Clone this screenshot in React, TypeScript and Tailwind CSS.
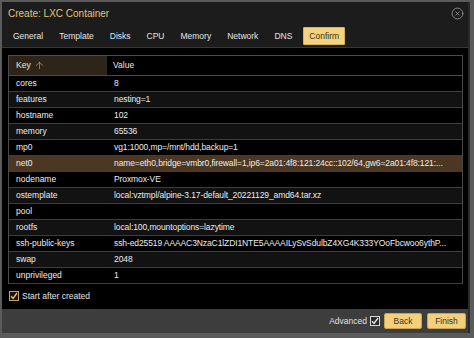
import React from 'react';
import { CircleX, ArrowUp } from 'lucide-react';

const rows: { key: string; value: string }[] = [
  { key: 'cores', value: '8' },
  { key: 'features', value: 'nesting=1' },
  { key: 'hostname', value: '102' },
  { key: 'memory', value: '65536' },
  { key: 'mp0', value: 'vg1:1000,mp=/mnt/hdd,backup=1' },
  { key: 'net0', value: 'name=eth0,bridge=vmbr0,firewall=1,ip6=2a01:4f8:121:24cc::102/64,gw6=2a01:4f8:121:...' },
  { key: 'nodename', value: 'Proxmox-VE' },
  { key: 'ostemplate', value: 'local:vztmpl/alpine-3.17-default_20221129_amd64.tar.xz' },
  { key: 'pool', value: '' },
  { key: 'rootfs', value: 'local:100,mountoptions=lazytime' },
  { key: 'ssh-public-keys', value: 'ssh-ed25519 AAAAC3NzaC1lZDI1NTE5AAAAILySvSdulbZ4XG4K333YOoFbcwoo6ythP...' },
  { key: 'swap', value: '2048' },
  { key: 'unprivileged', value: '1' },
];

const tabs = ['General', 'Template', 'Disks', 'CPU', 'Memory', 'Network', 'DNS', 'Confirm'];

const Check = ({ color }: { color: string }) => (
  <svg width="8" height="8" viewBox="0 0 8 8" fill="none">
    <polyline points="1,4.2 3.1,6.5 7,1" stroke={color} strokeWidth="1.3" />
  </svg>
);

export default function App() {
  return (
    <div className="w-[474px] h-[338px] bg-[#5b5b5b] pt-[2px] pl-[2px] pr-[4px] pb-[5px] font-['Liberation_Sans',Arial,sans-serif]">
      <div className="h-full flex flex-col border-r-2 border-[#2a2a2a] bg-[#1c1c1c]">
        {/* Title */}
        <div className="h-[23px] flex items-center justify-between pl-[6px] pr-[4px]">
          <span className="text-[10px] text-[#e6c46f]">Create: LXC Container</span>
          <CircleX size={13} strokeWidth={1.4} className="text-[#a3a3a3]" />
        </div>

        {/* Tabs */}
        <div className="h-[23px] flex items-center gap-[6px] pl-[6px] border-b border-[#383838]">
          {tabs.map((t) =>
            t === 'Confirm' ? (
              <span
                key={t}
                className="h-[18px] flex items-center px-[5px] text-[8.5px] text-[#3a3320] bg-[#f5d27e] border border-[#d8b15b] rounded-[1px]"
              >
                {t}
              </span>
            ) : (
              <span key={t} className="h-[18px] flex items-center px-[5px] text-[8.5px] text-[#e4e4e4]">
                {t}
              </span>
            )
          )}
        </div>

        {/* Content */}
        <div className="flex-1 bg-black pl-[6px] pt-[7px]">
          <div className="w-[455px] border border-[#4a4a4a] border-b-0">
            <div className="h-[20px] flex border-b border-[#4a4a4a] text-[8.5px] text-[#e6e6e6]">
              <div className="w-[98px] bg-[#2e2419] flex items-center gap-[3px] pl-[7px] border-r border-[#2a2a2a]">
                Key
                <ArrowUp size={11} strokeWidth={1.2} className="text-[#c4c4c4]" />
              </div>
              <div className="flex-1 flex items-center pl-[6px]">Value</div>
            </div>
            {rows.map((r, i) => {
              const bg = r.key === 'net0' ? 'bg-[#4c3822]' : i % 2 === 1 ? 'bg-[#121212]' : 'bg-black';
              return (
                <div
                  key={r.key}
                  className={`h-[16px] flex items-center border-b border-[#3d3d3d] text-[8.5px] text-[#ececec] ${bg}`}
                >
                  <div className="w-[99px] pl-[7px] whitespace-nowrap">{r.key}</div>
                  <div className="flex-1 pl-[6px] pr-[10px] whitespace-nowrap overflow-hidden tracking-[-0.1px]">{r.value}</div>
                </div>
              );
            })}
          </div>
          <div className="mt-[6px] ml-[1px] flex items-center gap-[3px]">
            <div className="w-[10px] h-[10px] border border-[#c9a552] bg-[#1a1408] flex items-center justify-center">
              <Check color="#e6c46f" />
            </div>
            <span className="text-[8.5px] text-[#e4e4e4]">Start after created</span>
          </div>
        </div>

        {/* Toolbar */}
        <div className="h-[24px] bg-[#3d3d3d] flex items-center justify-end pr-[2px]">
          <span className="text-[8.5px] text-[#e0e0e0] mr-[3px]">Advanced</span>
          <div className="w-[10px] h-[10px] border border-[#d8d8d8] bg-[#2a2a2a] flex items-center justify-center mr-[4px]">
            <Check color="#e8e8e8" />
          </div>
          <button className="w-[38px] h-[16px] bg-[#f3d07b] border border-[#c9a552] rounded-[2px] text-[8.5px] text-[#3a3320] mr-[5px]">
            Back
          </button>
          <button className="w-[39px] h-[16px] bg-[#f3d07b] border border-[#c9a552] rounded-[2px] text-[8.5px] text-[#3a3320]">
            Finish
          </button>
        </div>
      </div>
    </div>
  );
}
